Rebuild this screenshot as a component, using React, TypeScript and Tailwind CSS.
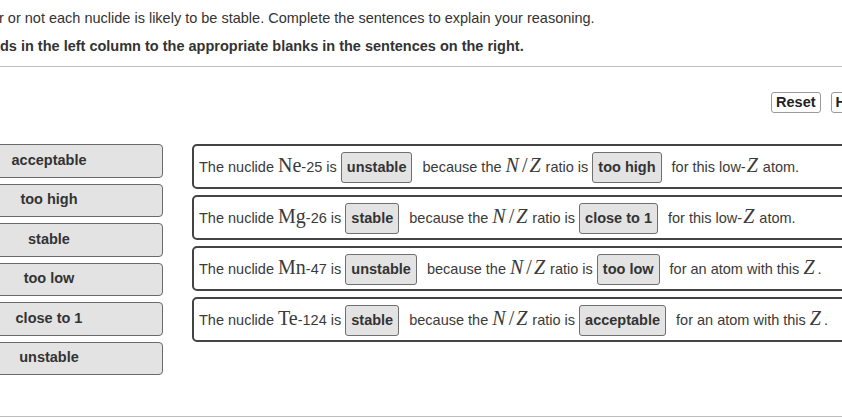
import React from "react";

const sans = { fontFamily: '"Liberation Sans", Arial, sans-serif' };

function M({ children, italic, cls }: { children: React.ReactNode; italic?: boolean; cls?: string }) {
  return (
    <span
      className={`text-[20px] ${italic ? "italic" : ""} ${cls ?? ""}`}
      style={{ fontFamily: '"Liberation Serif", "Times New Roman", serif' }}
    >
      {children}
    </span>
  );
}

function Chip({ children }: { children: React.ReactNode }) {
  return (
    <span className="inline-block h-[31px] leading-[29px] align-middle px-[5px] mr-[6px] border border-[#6f6f6f] rounded-[3px] bg-[#e3e3e3] font-bold text-[#333] text-[14.5px]">
      {children}
    </span>
  );
}

const items = ["acceptable", "too high", "stable", "too low", "close to 1", "unstable"];

type Row = { el: string; mass: string; a: string; b: string; tail: "low" | "this" };
const rows: Row[] = [
  { el: "Ne", mass: "25", a: "unstable", b: "too high", tail: "low" },
  { el: "Mg", mass: "26", a: "stable", b: "close to 1", tail: "low" },
  { el: "Mn", mass: "47", a: "unstable", b: "too low", tail: "this" },
  { el: "Te", mass: "124", a: "stable", b: "acceptable", tail: "this" },
];

export default function App() {
  return (
    <div className="w-[842px] h-[420px] overflow-hidden bg-white text-[#333]" style={sans}>
      <div className="pt-[9px] text-[14.5px] leading-[18px] whitespace-nowrap">
        <div className="ml-[-1px]">r or not each nuclide is likely to be stable. Complete the sentences to explain your reasoning.</div>
        <div className="mt-[10px] font-bold">ds in the left column to the appropriate blanks in the sentences on the right.</div>
      </div>
      <div className="mt-[11px] h-px bg-[#bdbdbd]" />
      <div className="mt-[25px] flex justify-end gap-[10px] mr-[-30px]">
        <button className="h-[21px] px-[4px] border border-[#9a9a9a] rounded-[3px] bg-white font-bold text-[14.5px] leading-[19px] text-[#222]">
          Reset
        </button>
        <button className="h-[21px] px-[4px] border border-[#9a9a9a] rounded-[3px] bg-white font-bold text-[14.5px] leading-[19px] text-[#222]">
          Help
        </button>
      </div>
      <div className="mt-[31px] flex gap-[29px]">
        <div className="ml-[-65px] w-[228px] shrink-0 flex flex-col gap-[6px]">
          {items.map((t) => (
            <div
              key={t}
              className="h-[33.5px] flex items-center justify-center border-[1.5px] border-[#6a6a6a] rounded-[4px] bg-[#e3e3e3] font-bold text-[14.5px] text-[#333]"
            >
              {t}
            </div>
          ))}
        </div>
        <div className="w-[700px] shrink-0 flex flex-col gap-[6px]">
          {rows.map((r) => (
            <div
              key={r.el}
              className="h-[45px] flex items-center border-2 border-[#444] rounded-[5px] pl-[5px] text-[14.5px] text-[#3a3a3a] whitespace-nowrap"
            >
              <span>
                The nuclide <M>{r.el}</M>-{r.mass} is <Chip>{r.a}</Chip> because the <M italic cls="mr-[1px]">N</M>
                <M cls="mx-[2px]">/</M>
                <M italic cls="mr-[1px]">Z</M> ratio is <Chip>{r.b}</Chip> {r.tail === "low" ? (
                  <>
                    for this low-<M italic cls="mx-[1px]">Z</M> atom.
                  </>
                ) : (
                  <>
                    for an atom with this <M italic cls="mr-[3px]">Z</M>.
                  </>
                )}
              </span>
            </div>
          ))}
        </div>
      </div>
      <div className="mt-[41px] h-px bg-[#bdbdbd]" />
    </div>
  );
}
